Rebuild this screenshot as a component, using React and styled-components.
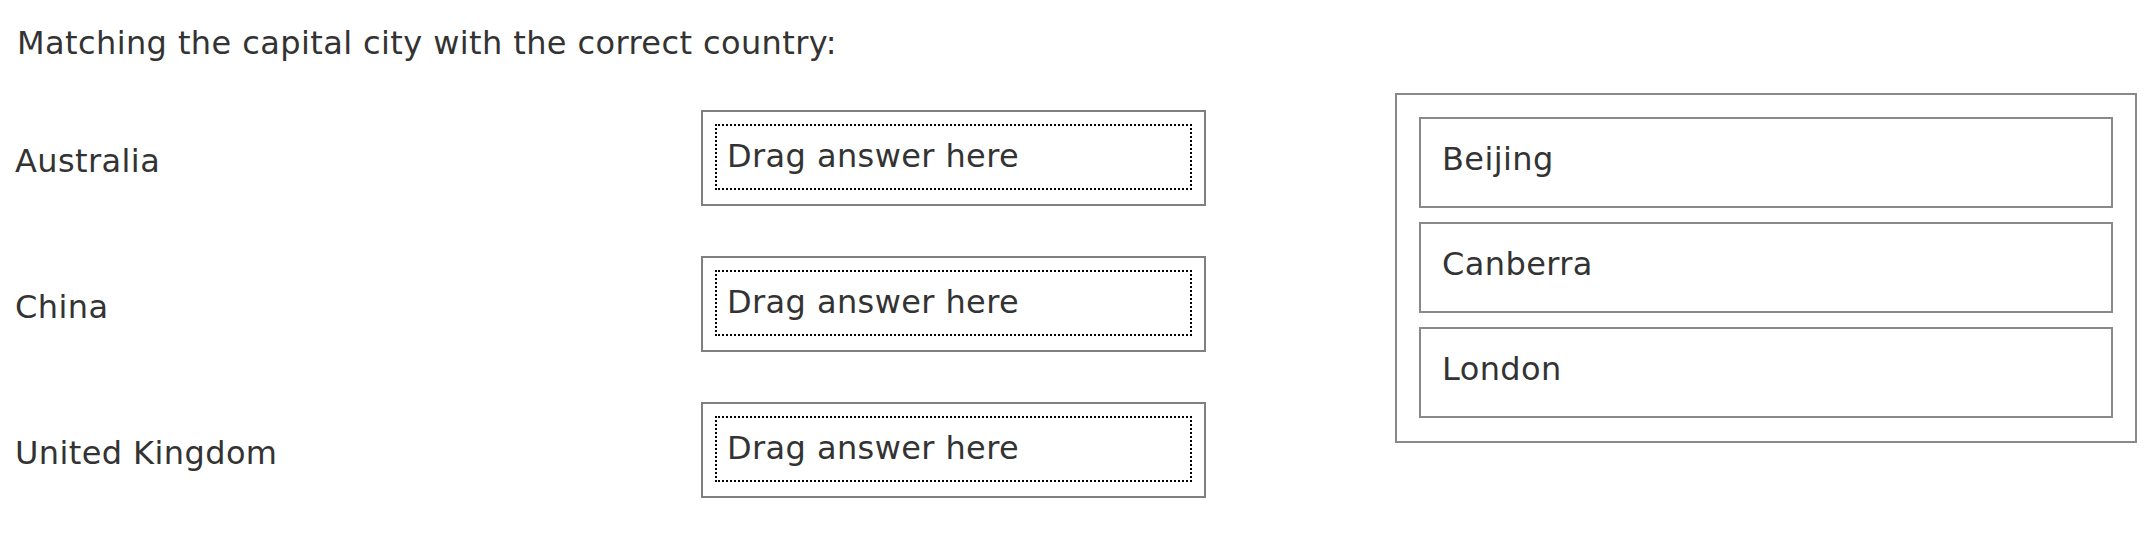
import React from "react";
import styled, { createGlobalStyle } from "styled-components";

const GlobalStyle = createGlobalStyle`
  body {
    margin: 0;
    background: #fff;
    font-family: "DejaVu Sans", "Liberation Sans", sans-serif;
    color: #333;
  }
`;

const Page = styled.div`
  padding: 0 15px;
  width: 2152px;
  box-sizing: border-box;
  letter-spacing: 0.4px;
`;

const Heading = styled.h1`
  margin: 19px 0 0 2px;
  font-size: 32px;
  font-weight: normal;
  line-height: 48px;
`;

const Main = styled.div`
  display: flex;
  align-items: flex-start;
  margin-top: 26px;
`;

const Questions = styled.div`
  display: flex;
  flex-direction: column;
  gap: 50px;
  padding-top: 17px;
`;

const Row = styled.div`
  display: flex;
  align-items: center;
  height: 96px;
`;

const Label = styled.div`
  width: 686px;
  padding-top: 6px;
  font-size: 32px;
  line-height: 48px;
`;

const DropZone = styled.div`
  width: 505px;
  box-sizing: border-box;
  border: 2px solid #808080;
  padding: 12px 12px 14px 12px;
`;

const DropTarget = styled.div`
  height: 66px;
  box-sizing: border-box;
  border: 2px dotted #000;
  padding: 6px 10px 0;
  font-size: 32px;
  line-height: 48px;
`;

const AnswerBank = styled.div`
  margin-left: 189px;
  width: 744px;
  box-sizing: border-box;
  border: 2px solid #8a8888;
  padding: 22px 22px 23px;
  display: flex;
  flex-direction: column;
  gap: 14px;
`;

const Answer = styled.div`
  height: 91px;
  box-sizing: border-box;
  border: 2px solid #8a8888;
  padding: 16px 21px 0;
  font-size: 32px;
  line-height: 48px;
`;

const countries = ["Australia", "China", "United Kingdom"];
const cities = ["Beijing", "Canberra", "London"];

export default function App() {
  return (
    <Page>
      <GlobalStyle />
      <Heading>Matching the capital city with the correct country:</Heading>
      <Main>
        <Questions>
          {countries.map((c) => (
            <Row key={c}>
              <Label>{c}</Label>
              <DropZone>
                <DropTarget>Drag answer here</DropTarget>
              </DropZone>
            </Row>
          ))}
        </Questions>
        <AnswerBank>
          {cities.map((c) => (
            <Answer key={c}>{c}</Answer>
          ))}
        </AnswerBank>
      </Main>
    </Page>
  );
}
